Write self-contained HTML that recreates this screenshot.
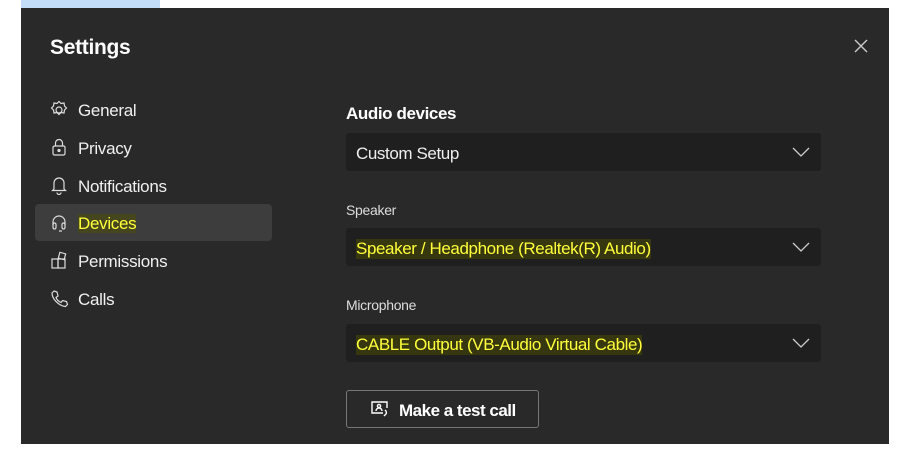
<!DOCTYPE html>
<html><head><style>
*{margin:0;padding:0;box-sizing:border-box}
body{width:900px;height:450px;background:#fff;position:relative;overflow:hidden;font-family:"Liberation Sans",sans-serif;color:#fff}
.strip{position:absolute;left:21px;top:0;width:139px;height:8px;background:#c3dcf7}
.panel{position:absolute;left:21px;top:8px;width:868px;height:436px;background:#292929}
.t{position:absolute;white-space:nowrap}
.nav{position:absolute;left:78px;font-size:17px;color:#f0f0f0;letter-spacing:-0.3px}
.ic{position:absolute;left:49px}
.sel{position:absolute;left:35px;top:204px;width:237px;height:37px;background:#3d3d3d;border-radius:4px}
.dd{position:absolute;left:346px;width:475px;height:38px;background:#1f1f1f;border-radius:3px}
.dd span{position:absolute;left:10px;top:11px;font-size:17px;letter-spacing:-0.4px}
.dd svg{position:absolute;right:11px;top:14px}
.y{color:#ffff3a;background:rgba(80,80,0,.5)}
.lbl{position:absolute;left:346px;font-size:14px;color:#ddd;letter-spacing:-0.3px}
.btn{position:absolute;left:346px;top:390px;width:193px;height:38px;border:1px solid #777;border-radius:3px;font-size:17px;font-weight:bold;letter-spacing:-0.5px}
</style></head><body>
<div class="strip"></div>
<div class="panel"></div>
<div class="t" style="left:50px;top:36px;font-size:21px;font-weight:bold;letter-spacing:-0.3px">Settings</div>
<svg class="t" style="left:853px;top:38px" width="16" height="16" viewBox="0 0 16 16"><path d="M2 2L14 14M14 2L2 14" stroke="#ccc" stroke-width="1.4"/></svg>
<div class="sel"></div>
<svg class="ic" style="top:100px" width="20" height="20" viewBox="0 0 20 20" fill="none" stroke="#ddd" stroke-width="1.2"><path d="M10 1.5l2 2 3-.5.5 3 2 2-2 2-.5 3-3-.5-2 2-2-2-3 .5-.5-3-2-2 2-2 .5-3 3 .5z"/><circle cx="10" cy="10" r="3"/></svg>
<div class="nav" style="top:101px">General</div>
<svg class="ic" style="top:137px" width="20" height="20" viewBox="0 0 20 20" fill="none" stroke="#ddd" stroke-width="1.2"><rect x="4" y="9" width="12" height="9" rx="1.5"/><path d="M6.5 9V6a3.5 3.5 0 017 0v3"/><circle cx="10" cy="13.5" r="1" fill="#ddd"/></svg>
<div class="nav" style="top:139px">Privacy</div>
<svg class="ic" style="top:175px" width="20" height="20" viewBox="0 0 20 20" fill="none" stroke="#ddd" stroke-width="1.2"><path d="M5 14V8a5 5 0 0110 0v6l1.5 1.5h-13z"/><path d="M8 17.5a2 2 0 004 0"/></svg>
<div class="nav" style="top:177px">Notifications</div>
<svg class="ic" style="top:213px" width="20" height="20" viewBox="0 0 20 20" fill="none" stroke="#ddd" stroke-width="1.2"><path d="M4 12V9a6 6 0 0112 0v3"/><rect x="4" y="10" width="3" height="6" rx="1.5"/><rect x="13" y="10" width="3" height="6" rx="1.5"/><path d="M10 18h3"/></svg>
<div class="nav" style="top:214px"><span class="y">Devices</span></div>
<svg class="ic" style="top:251px" width="20" height="20" viewBox="0 0 20 20" fill="none" stroke="#ddd" stroke-width="1.2"><rect x="3" y="8" width="6" height="9"/><rect x="9" y="8" width="7" height="9"/><rect x="10" y="2" width="6" height="6" transform="rotate(15 13 5)"/></svg>
<div class="nav" style="top:252px">Permissions</div>
<svg class="ic" style="top:289px" width="20" height="20" viewBox="0 0 20 20" fill="none" stroke="#ddd" stroke-width="1.2"><path d="M5 2l3 1 1 4-2 1.5c1 2.5 2.5 4 5 5l1.5-2 4 1 1 3-2 2C10 17 3 10 3 4z"/></svg>
<div class="nav" style="top:290px">Calls</div>
<div class="t" style="left:346px;top:104px;font-size:17px;font-weight:bold;letter-spacing:-0.4px">Audio devices</div>
<div class="dd" style="top:133px"><span style="color:#eee">Custom Setup</span><svg width="18" height="10" viewBox="0 0 18 10"><path d="M1 1l8 8 8-8" stroke="#ccc" fill="none" stroke-width="1.3"/></svg></div>
<div class="lbl" style="top:202px">Speaker</div>
<div class="dd" style="top:228px"><span class="y">Speaker / Headphone (Realtek(R) Audio)</span><svg width="18" height="10" viewBox="0 0 18 10"><path d="M1 1l8 8 8-8" stroke="#ccc" fill="none" stroke-width="1.3"/></svg></div>
<div class="lbl" style="top:297px">Microphone</div>
<div class="dd" style="top:324px"><span class="y">CABLE Output (VB-Audio Virtual Cable)</span><svg width="18" height="10" viewBox="0 0 18 10"><path d="M1 1l8 8 8-8" stroke="#ccc" fill="none" stroke-width="1.3"/></svg></div>
<div class="btn"><svg style="position:absolute;left:23px;top:10px" width="20" height="16" viewBox="0 0 20 16" fill="none" stroke="#fff" stroke-width="1.4"><path d="M13 12H2V1h15v6"/><circle cx="9" cy="5" r="1.6"/><path d="M6 10a3 3 0 016 0"/><path d="M15 9c1 1 2 2 1 4l-2 2"/></svg><span style="position:absolute;left:52px;top:10px">Make a test call</span></div>
</body></html>
